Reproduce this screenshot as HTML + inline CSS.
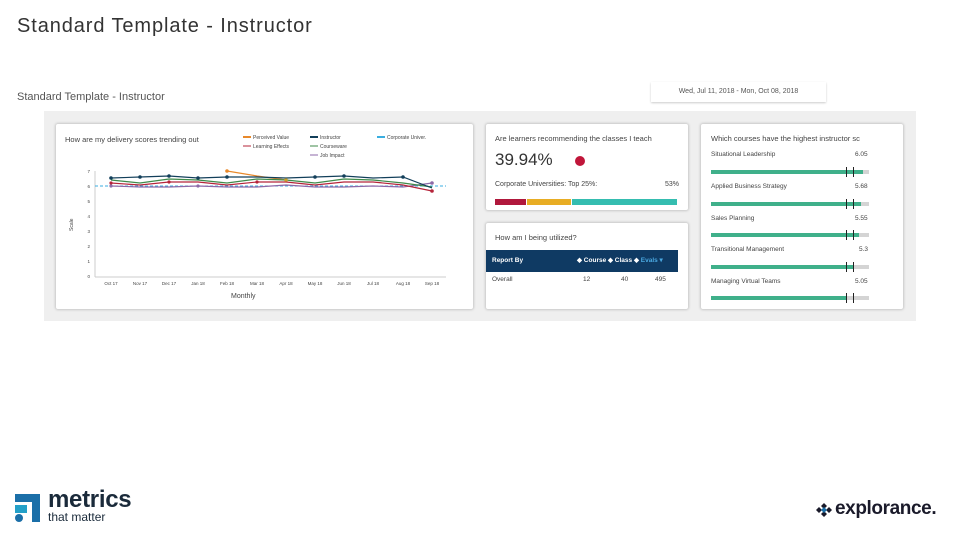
<!DOCTYPE html>
<html><head><meta charset="utf-8"><style>
body{margin:0;width:960px;height:540px;background:#fff;font-family:"Liberation Sans",sans-serif;position:relative;overflow:hidden}
.a{position:absolute}
.card{position:absolute;background:#fff;box-shadow:0 0 2px 1px #c8c8c8;border-radius:2px}
.t{font-size:7px;color:#444;white-space:nowrap}
</style></head><body>
<div class="a" style="left:17px;top:15px;font-size:20px;color:#333;letter-spacing:0.9px">Standard Template - Instructor</div>
<div class="a" style="left:17px;top:91px;font-size:11px;color:#555">Standard Template - Instructor</div>
<div class="a" style="left:651px;top:82px;width:175px;height:20px;box-shadow:0 1px 2px #ccc;font-size:7px;color:#555;text-align:center;line-height:20px">Wed, Jul 11, 2018 - Mon, Oct 08, 2018</div>
<div class="a" style="left:44px;top:111px;width:872px;height:210px;background:#efefef"></div>

<div class="card" style="left:56px;top:124px;width:417px;height:185px">
<div class="a t" style="left:9px;top:11px;font-size:7.5px">How are my delivery scores trending out</div>
</div>
<svg class="a" style="left:56px;top:124px" width="417" height="185">
<g font-size="5" fill="#444" font-family="Liberation Sans">
<line x1="187" y1="13" x2="195" y2="13" stroke="#e8892b" stroke-width="2"/><text x="197" y="15">Perceived Value</text>
<line x1="187" y1="22" x2="195" y2="22" stroke="#b5243a" stroke-width="1"/><text x="197" y="24">Learning Effects</text>
<line x1="254" y1="13" x2="262" y2="13" stroke="#123f5a" stroke-width="2"/><text x="264" y="15">Instructor</text>
<line x1="254" y1="22" x2="262" y2="22" stroke="#3f8a4a" stroke-width="1"/><text x="264" y="24">Courseware</text>
<line x1="254" y1="31" x2="262" y2="31" stroke="#8d6aa8" stroke-width="1"/><text x="264" y="33">Job Impact</text>
<line x1="321" y1="13" x2="329" y2="13" stroke="#3aaee0" stroke-width="2"/><text x="331" y="15">Corporate Univer.</text>
<text x="7" y="103" transform="rotate(-90 14 100)">Scale</text>
<text x="175" y="174" font-size="7">Monthly</text>
</g>
<g font-size="4.5" fill="#444" text-anchor="end">
<text x="34" y="154">0</text><text x="34" y="139">1</text><text x="34" y="124">2</text><text x="34" y="109">3</text><text x="34" y="94">4</text><text x="34" y="79">5</text><text x="34" y="64">6</text><text x="34" y="49">7</text>
</g>
<line x1="39" y1="47" x2="39" y2="153" stroke="#ccc"/><line x1="39" y1="153" x2="390" y2="153" stroke="#ccc"/>
<g font-size="4.5" fill="#444" text-anchor="middle">
<text x="55" y="161">Oct 17</text><text x="84" y="161">Nov 17</text><text x="113" y="161">Dec 17</text><text x="142" y="161">Jan 18</text><text x="171" y="161">Feb 18</text><text x="201" y="161">Mar 18</text><text x="230" y="161">Apr 18</text><text x="259" y="161">May 18</text><text x="288" y="161">Jun 18</text><text x="317" y="161">Jul 18</text><text x="347" y="161">Aug 18</text><text x="376" y="161">Sep 18</text>
</g>
<line x1="39" y1="62" x2="390" y2="62" stroke="#3aaee0" stroke-dasharray="3 2"/>
<g fill="none" stroke-width="1.2">
<polyline stroke="#e8892b" points="171,47 201,52 230,56"/>
<polyline stroke="#8d6aa8" points="55,62 84,63 113,63 142,62 171,63 201,63 230,61 259,63 288,63 317,62 347,63 376,59"/>
<polyline stroke="#b5243a" points="55,59 84,61 113,58 142,58 171,61 201,58 230,58 259,61 288,58 317,58 347,61 376,67"/>
<polyline stroke="#3f8a4a" points="55,56 84,59 113,55 142,56 171,59 201,55 230,56 259,59 288,55 317,56 347,59 376,63"/>
<polyline stroke="#123f5a" points="55,54 84,53 113,52 142,54 171,53 201,53 230,54 259,53 288,52 317,54 347,53 376,64"/>
</g>
<g fill="#123f5a"><circle cx="55" cy="54" r="1.8"/><circle cx="84" cy="53" r="1.8"/><circle cx="113" cy="52" r="1.8"/><circle cx="142" cy="54" r="1.8"/><circle cx="171" cy="53" r="1.8"/><circle cx="259" cy="53" r="1.8"/><circle cx="288" cy="52" r="1.8"/><circle cx="347" cy="53" r="1.8"/></g>
<g fill="#b5243a"><circle cx="55" cy="59" r="1.6"/><circle cx="113" cy="58" r="1.6"/><circle cx="201" cy="58" r="1.6"/><circle cx="376" cy="67" r="1.8"/></g>
<g fill="#8d6aa8"><circle cx="55" cy="62" r="1.6"/><circle cx="142" cy="62" r="1.6"/><circle cx="376" cy="59" r="1.8"/></g>
<circle cx="171" cy="47" r="1.8" fill="#e8892b"/><circle cx="230" cy="56" r="1.8" fill="#c9a030"/>
</svg>

<div class="card" style="left:486px;top:124px;width:202px;height:86px">
<div class="a t" style="left:9px;top:10px;font-size:7.5px">Are learners recommending the classes I teach</div>
<div class="a" style="left:9px;top:26px;font-size:17px;color:#333;font-weight:300">39.94%</div>
<div class="a" style="left:89px;top:32px;width:10px;height:10px;border-radius:50%;background:#c0163a"></div>
<div class="a t" style="left:9px;top:57px;font-size:7px">Corporate Universities: Top 25%:</div>
<div class="a t" style="left:179px;top:57px;font-size:7px">53%</div>
<div class="a" style="left:9px;top:75px;width:31px;height:6px;background:#b0183c"></div>
<div class="a" style="left:41px;top:75px;width:44px;height:6px;background:#e8ad24"></div>
<div class="a" style="left:86px;top:75px;width:105px;height:6px;background:#35bdb0"></div>
</div>

<div class="card" style="left:486px;top:223px;width:202px;height:86px">
<div class="a t" style="left:9px;top:10px;font-size:7.5px">How am I being utilized?</div>
<div class="a" style="left:0;top:27px;width:192px;height:22px;background:#0f3a63;color:#fff;font-size:6.5px;font-weight:bold;line-height:22px">
<span class="a" style="left:6px">Report By</span><span class="a" style="left:91px">◆ Course ◆ Class ◆ <span style="color:#4aa8e0">Evals ▾</span></span></div>
<div class="a t" style="left:6px;top:53px;font-size:6.5px">Overall</div>
<div class="a t" style="left:97px;top:53px;font-size:6.5px">12</div>
<div class="a t" style="left:135px;top:53px;font-size:6.5px">40</div>
<div class="a t" style="left:169px;top:53px;font-size:6.5px">495</div>
</div>

<div class="card" style="left:701px;top:124px;width:202px;height:185px">
<div class="a t" style="left:10px;top:10px;font-size:7.5px">Which courses have the highest instructor sc</div>
</div>
<div class="a" style="left:711px;top:151px;width:160px;height:160px">
<div class="a t" style="left:0;top:0;font-size:6.5px">Situational Leadership</div><div class="a t" style="left:144px;top:0;font-size:6.5px">6.05</div>
<div class="a" style="left:0;top:19px;width:158px;height:4px;background:#d4d4d4"></div><div class="a" style="left:0;top:19px;width:152px;height:4px;background:#3fb08a"></div>
<div class="a" style="left:135px;top:16px;width:1px;height:10px;background:#222"></div><div class="a" style="left:142px;top:16px;width:1px;height:10px;background:#222"></div>

<div class="a t" style="left:0;top:32px;font-size:6.5px">Applied Business Strategy</div><div class="a t" style="left:144px;top:32px;font-size:6.5px">5.68</div>
<div class="a" style="left:0;top:51px;width:158px;height:4px;background:#d4d4d4"></div><div class="a" style="left:0;top:51px;width:150px;height:4px;background:#3fb08a"></div>
<div class="a" style="left:135px;top:48px;width:1px;height:10px;background:#222"></div><div class="a" style="left:142px;top:48px;width:1px;height:10px;background:#222"></div>

<div class="a t" style="left:0;top:64px;font-size:6.5px">Sales Planning</div><div class="a t" style="left:144px;top:64px;font-size:6.5px">5.55</div>
<div class="a" style="left:0;top:82px;width:158px;height:4px;background:#d4d4d4"></div><div class="a" style="left:0;top:82px;width:148px;height:4px;background:#3fb08a"></div>
<div class="a" style="left:135px;top:79px;width:1px;height:10px;background:#222"></div><div class="a" style="left:142px;top:79px;width:1px;height:10px;background:#222"></div>

<div class="a t" style="left:0;top:95px;font-size:6.5px">Transitional Management</div><div class="a t" style="left:148px;top:95px;font-size:6.5px">5.3</div>
<div class="a" style="left:0;top:114px;width:158px;height:4px;background:#d4d4d4"></div><div class="a" style="left:0;top:114px;width:142px;height:4px;background:#3fb08a"></div>
<div class="a" style="left:135px;top:111px;width:1px;height:10px;background:#222"></div><div class="a" style="left:142px;top:111px;width:1px;height:10px;background:#222"></div>

<div class="a t" style="left:0;top:127px;font-size:6.5px">Managing Virtual Teams</div><div class="a t" style="left:144px;top:127px;font-size:6.5px">5.05</div>
<div class="a" style="left:0;top:145px;width:158px;height:4px;background:#d4d4d4"></div><div class="a" style="left:0;top:145px;width:135px;height:4px;background:#3fb08a"></div>
<div class="a" style="left:135px;top:142px;width:1px;height:10px;background:#222"></div><div class="a" style="left:142px;top:142px;width:1px;height:10px;background:#222"></div>
</div>

<svg class="a" style="left:14px;top:493px" width="32" height="30">
<path d="M1 1 H26 V29 H18 V9 H1 Z" fill="#1b6fa8"/>
<rect x="1" y="12" width="12" height="8" fill="#23a0c8"/>
<circle cx="5" cy="25" r="4" fill="#1b6fa8"/>
</svg>
<div class="a" style="left:48px;top:486px;font-size:24px;font-weight:bold;color:#1a2a3a;letter-spacing:-0.3px">metrics</div>
<div class="a" style="left:48px;top:510px;font-size:12px;color:#1a2a3a">that matter</div>

<svg class="a" style="left:814px;top:502px" width="20" height="18">
<path d="M5 5 L8 8 L5 11 L2 8Z M10 1 L13 4 L10 7 L7 4Z M10 9 L13 12 L10 15 L7 12Z M15 5 L18 8 L15 11 L12 8Z" fill="#1a1a2a"/>
<path d="M10 5 L13 8 L10 11 L7 8Z" fill="#1b6fa8"/>
</svg>
<div class="a" style="left:835px;top:498px;font-size:19px;font-weight:bold;color:#1a1a2a;letter-spacing:-0.4px">explorance.</div>
</body></html>
